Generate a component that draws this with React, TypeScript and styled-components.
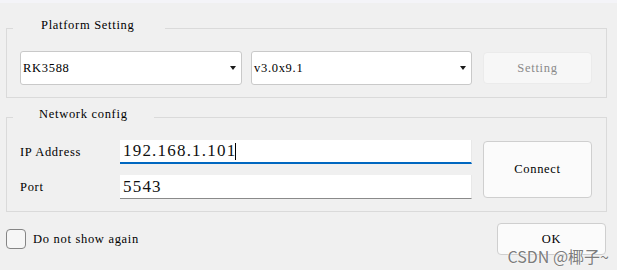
import React from 'react';
import styled, { createGlobalStyle } from 'styled-components';

const Global = createGlobalStyle`
  html, body { margin: 0; padding: 0; background: #f0f0f0; }
  body { width: 617px; height: 270px; overflow: hidden; }
`;

const Window = styled.div`
  position: relative;
  width: 617px;
  height: 270px;
  box-sizing: border-box;
  background: #f0f0f0;
  border-top: 3px solid #f4f4f8;
  padding: 16px 10px 0 6px;
  display: flex;
  flex-direction: column;
  font-family: "Liberation Serif", serif;
  font-size: 12.5px;
  letter-spacing: 0.7px;
  color: #000;
`;

const Group = styled.fieldset<{ $gap?: number }>`
  margin: ${(p) => p.$gap ?? 0}px 0 0 0;
  padding: 0;
  min-width: 0;
  border: 1px solid #dadada;
`;

const Legend = styled.legend<{ $left: number; $right: number }>`
  margin-left: 6px;
  padding: 0 ${(p) => p.$right}px 6px ${(p) => p.$left}px;
  line-height: 12px;
  height: 12px;
`;

const PlatformRow = styled.div`
  display: flex;
  align-items: center;
  padding: 14px 0 12px 13px;
`;

const Combo = styled.div<{ $w: number }>`
  box-sizing: border-box;
  width: ${(p) => p.$w}px;
  height: 34px;
  background: #fff;
  border: 1px solid #c9c9c9;
  border-radius: 3px;
  display: flex;
  align-items: center;
  justify-content: space-between;
  padding: 0 5px 0 2px;
  margin-right: ${(p) => (p.$w === 222 ? 9 : 11)}px;
`;

const Arrow = styled.span`
  width: 0;
  height: 0;
  border-left: 3.5px solid transparent;
  border-right: 3.5px solid transparent;
  border-top: 4px solid #1a1a1a;
`;

const Button = styled.button<{ $disabled?: boolean; $h: number }>`
  box-sizing: border-box;
  width: 109px;
  height: ${(p) => p.$h}px;
  padding: 0;
  font: inherit;
  letter-spacing: inherit;
  color: ${(p) => (p.$disabled ? '#8a8a8a' : '#000')};
  background: ${(p) => (p.$disabled ? '#f7f7f7' : '#fbfbfb')};
  border: 1px solid ${(p) => (p.$disabled ? '#ebebeb' : '#cfcfcf')};
  border-radius: 4px;
`;

const NetGrid = styled.div`
  display: grid;
  grid-template-columns: 89px 352px 109px;
  grid-template-rows: 24px 24px;
  column-gap: 11px;
  row-gap: 11px;
  align-items: center;
  padding: 14px 0 12px 13px;
`;

const Label = styled.span`
  line-height: 12px;
`;

const Field = styled.div<{ $active?: boolean }>`
  box-sizing: border-box;
  height: 24px;
  background: #fff;
  border-bottom: ${(p) => (p.$active ? '2px solid #0067c0' : '1px solid #8a8a8a')};
  border-right: 1px solid #e8e8e8;
  padding: 0 0 0 3px;
  display: flex;
  align-items: center;
  font-family: "Liberation Serif", serif;
  font-size: 17px;
  letter-spacing: 1.2px;
  color: #111;
`;

const Caret = styled.span`
  display: inline-block;
  width: 1px;
  height: 17px;
  background: #000;
  margin-left: -1px;
`;

const ConnectCell = styled.div`
  grid-column: 3;
  grid-row: 1 / span 2;
  display: flex;
  align-items: center;
`;

const BottomRow = styled.div`
  margin-top: 11px;
  margin-right: 1px;
  display: flex;
  align-items: center;
  justify-content: space-between;
`;

const Check = styled.label`
  display: flex;
  align-items: center;
  gap: 7px;
`;

const Box = styled.span`
  box-sizing: border-box;
  width: 20px;
  height: 20px;
  border: 1px solid #858585;
  border-radius: 4px;
  background: #f6f6f6;
`;

const Watermark = styled.div`
  position: absolute;
  right: 8px;
  top: 242px;
  font-family: "Noto Sans CJK SC", "Noto Sans", sans-serif;
  font-size: 16px;
  letter-spacing: 0;
  line-height: 22px;
  color: #7c7c7c;
  text-shadow: 0 0 2px #fff, 0 0 1px #fff;
`;

export default function App() {
  return (
    <>
      <Global />
      <Window>
        <Group>
          <Legend $left={28} $right={30}>Platform Setting</Legend>
          <PlatformRow>
            <Combo $w={222}>
              <span>RK3588</span>
              <Arrow />
            </Combo>
            <Combo $w={221}>
              <span>v3.0x9.1</span>
              <Arrow />
            </Combo>
            <Button $disabled $h={32}>Setting</Button>
          </PlatformRow>
        </Group>
        <Group $gap={10}>
          <Legend $left={26} $right={26}>Network config</Legend>
          <NetGrid>
            <Label>IP Address</Label>
            <Field $active>
              192.168.1.101<Caret />
            </Field>
            <ConnectCell>
              <Button $h={57}>Connect</Button>
            </ConnectCell>
            <Label>Port</Label>
            <Field>5543</Field>
          </NetGrid>
        </Group>
        <BottomRow>
          <Check>
            <Box />
            <span>Do not show again</span>
          </Check>
          <Button $h={32}>OK</Button>
        </BottomRow>
        <Watermark>CSDN @椰子~</Watermark>
      </Window>
    </>
  );
}
